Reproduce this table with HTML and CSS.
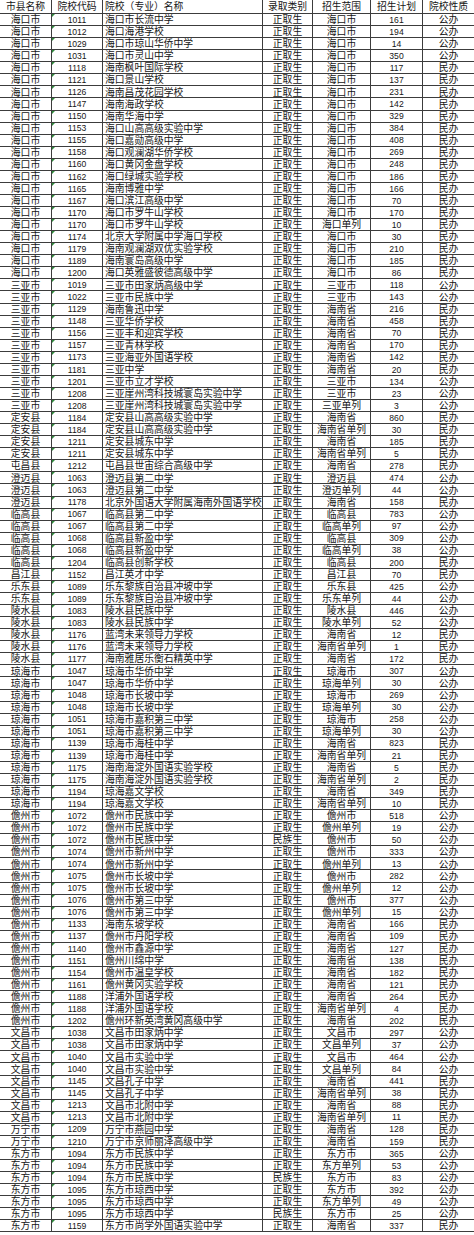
FILE: index.html
```html
<!DOCTYPE html>
<html lang="zh-CN">
<head>
<meta charset="utf-8">
<title>院校招生计划</title>
<link rel="stylesheet" href="styles.css">
</head>
<body>
<div class="sheet">
<span>市县名称</span><span>院校代码</span><span>院校（专业）名称</span><span>录取类别</span><span>招生范围</span><span>招生计划</span><span>院校性质</span>
<span>海口市</span><span>1011</span><span>海口市长流中学</span><span>正取生</span><span>海口市</span><span>161</span><span>公办</span>
<span>海口市</span><span>1012</span><span>海口海港学校</span><span>正取生</span><span>海口市</span><span>194</span><span>公办</span>
<span>海口市</span><span>1029</span><span>海口市琼山华侨中学</span><span>正取生</span><span>海口市</span><span>14</span><span>公办</span>
<span>海口市</span><span>1031</span><span>海口市灵山中学</span><span>正取生</span><span>海口市</span><span>350</span><span>公办</span>
<span>海口市</span><span>1118</span><span>海南枫叶国际学校</span><span>正取生</span><span>海口市</span><span>117</span><span>民办</span>
<span>海口市</span><span>1121</span><span>海口景山学校</span><span>正取生</span><span>海口市</span><span>137</span><span>民办</span>
<span>海口市</span><span>1126</span><span>海南昌茂花园学校</span><span>正取生</span><span>海口市</span><span>231</span><span>民办</span>
<span>海口市</span><span>1147</span><span>海南海政学校</span><span>正取生</span><span>海口市</span><span>142</span><span>民办</span>
<span>海口市</span><span>1150</span><span>海南华海中学</span><span>正取生</span><span>海口市</span><span>329</span><span>民办</span>
<span>海口市</span><span>1153</span><span>海口山高高级实验中学</span><span>正取生</span><span>海口市</span><span>384</span><span>民办</span>
<span>海口市</span><span>1155</span><span>海口嘉勋高级中学</span><span>正取生</span><span>海口市</span><span>408</span><span>民办</span>
<span>海口市</span><span>1158</span><span>海口观澜湖华侨学校</span><span>正取生</span><span>海口市</span><span>269</span><span>民办</span>
<span>海口市</span><span>1160</span><span>海口黄冈金盘学校</span><span>正取生</span><span>海口市</span><span>248</span><span>民办</span>
<span>海口市</span><span>1162</span><span>海口绿城实验学校</span><span>正取生</span><span>海口市</span><span>186</span><span>民办</span>
<span>海口市</span><span>1165</span><span>海南博雅中学</span><span>正取生</span><span>海口市</span><span>166</span><span>民办</span>
<span>海口市</span><span>1167</span><span>海口滨江高级中学</span><span>正取生</span><span>海口市</span><span>70</span><span>民办</span>
<span>海口市</span><span>1170</span><span>海口市罗牛山学校</span><span>正取生</span><span>海口市</span><span>170</span><span>民办</span>
<span>海口市</span><span>1170</span><span>海口市罗牛山学校</span><span>正取生</span><span>海口单列</span><span>10</span><span>民办</span>
<span>海口市</span><span>1174</span><span>北京大学附属中学海口学校</span><span>正取生</span><span>海口市</span><span>30</span><span>民办</span>
<span>海口市</span><span>1179</span><span>海南观澜湖双优实验学校</span><span>正取生</span><span>海口市</span><span>210</span><span>民办</span>
<span>海口市</span><span>1189</span><span>海南寰岛高级中学</span><span>正取生</span><span>海口市</span><span>185</span><span>民办</span>
<span>海口市</span><span>1200</span><span>海口英雅盛彼德高级中学</span><span>正取生</span><span>海口市</span><span>86</span><span>民办</span>
<span>三亚市</span><span>1019</span><span>三亚市田家炳高级中学</span><span>正取生</span><span>三亚市</span><span>118</span><span>公办</span>
<span>三亚市</span><span>1022</span><span>三亚市民族中学</span><span>正取生</span><span>三亚市</span><span>143</span><span>公办</span>
<span>三亚市</span><span>1129</span><span>海南鲁迅中学</span><span>正取生</span><span>海南省</span><span>216</span><span>民办</span>
<span>三亚市</span><span>1148</span><span>三亚华侨学校</span><span>正取生</span><span>海南省</span><span>458</span><span>民办</span>
<span>三亚市</span><span>1156</span><span>三亚丰和迎宾学校</span><span>正取生</span><span>海南省</span><span>70</span><span>民办</span>
<span>三亚市</span><span>1157</span><span>三亚青林学校</span><span>正取生</span><span>海南省</span><span>170</span><span>民办</span>
<span>三亚市</span><span>1173</span><span>三亚海亚外国语学校</span><span>正取生</span><span>海南省</span><span>142</span><span>民办</span>
<span>三亚市</span><span>1181</span><span>三亚中学</span><span>正取生</span><span>海南省</span><span>20</span><span>民办</span>
<span>三亚市</span><span>1201</span><span>三亚市立才学校</span><span>正取生</span><span>三亚市</span><span>134</span><span>公办</span>
<span>三亚市</span><span>1208</span><span>三亚崖州湾科技城寰岛实验中学</span><span>正取生</span><span>三亚市</span><span>23</span><span>公办</span>
<span>三亚市</span><span>1208</span><span>三亚崖州湾科技城寰岛实验中学</span><span>正取生</span><span>三亚单列</span><span>3</span><span>公办</span>
<span>定安县</span><span>1184</span><span>定安县山高高级实验中学</span><span>正取生</span><span>海南省</span><span>860</span><span>民办</span>
<span>定安县</span><span>1184</span><span>定安县山高高级实验中学</span><span>正取生</span><span>海南省单列</span><span>30</span><span>民办</span>
<span>定安县</span><span>1211</span><span>定安县城东中学</span><span>正取生</span><span>海南省</span><span>185</span><span>民办</span>
<span>定安县</span><span>1211</span><span>定安县城东中学</span><span>正取生</span><span>海南省单列</span><span>5</span><span>民办</span>
<span>屯昌县</span><span>1212</span><span>屯昌县世宙综合高级中学</span><span>正取生</span><span>海南省</span><span>278</span><span>民办</span>
<span>澄迈县</span><span>1063</span><span>澄迈县第二中学</span><span>正取生</span><span>澄迈县</span><span>474</span><span>公办</span>
<span>澄迈县</span><span>1063</span><span>澄迈县第二中学</span><span>正取生</span><span>澄迈单列</span><span>44</span><span>公办</span>
<span>澄迈县</span><span>1178</span><span>北京外国语大学附属海南外国语学校</span><span>正取生</span><span>海南省</span><span>158</span><span>民办</span>
<span>临高县</span><span>1067</span><span>临高县第二中学</span><span>正取生</span><span>临高县</span><span>783</span><span>公办</span>
<span>临高县</span><span>1067</span><span>临高县第二中学</span><span>正取生</span><span>临高单列</span><span>97</span><span>公办</span>
<span>临高县</span><span>1068</span><span>临高县新盈中学</span><span>正取生</span><span>临高县</span><span>309</span><span>公办</span>
<span>临高县</span><span>1068</span><span>临高县新盈中学</span><span>正取生</span><span>临高单列</span><span>38</span><span>公办</span>
<span>临高县</span><span>1204</span><span>临高县创新学校</span><span>正取生</span><span>临高县</span><span>200</span><span>民办</span>
<span>昌江县</span><span>1152</span><span>昌江英才中学</span><span>正取生</span><span>昌江县</span><span>70</span><span>民办</span>
<span>乐东县</span><span>1089</span><span>乐东黎族自治县冲坡中学</span><span>正取生</span><span>乐东县</span><span>425</span><span>公办</span>
<span>乐东县</span><span>1089</span><span>乐东黎族自治县冲坡中学</span><span>正取生</span><span>乐东单列</span><span>44</span><span>公办</span>
<span>陵水县</span><span>1083</span><span>陵水县民族中学</span><span>正取生</span><span>陵水县</span><span>446</span><span>公办</span>
<span>陵水县</span><span>1083</span><span>陵水县民族中学</span><span>正取生</span><span>陵水单列</span><span>52</span><span>公办</span>
<span>陵水县</span><span>1176</span><span>蓝湾未来领导力学校</span><span>正取生</span><span>海南省</span><span>12</span><span>民办</span>
<span>陵水县</span><span>1176</span><span>蓝湾未来领导力学校</span><span>正取生</span><span>海南省单列</span><span>1</span><span>民办</span>
<span>陵水县</span><span>1177</span><span>海南雅居乐衡石精英中学</span><span>正取生</span><span>海南省</span><span>172</span><span>民办</span>
<span>琼海市</span><span>1047</span><span>琼海市华侨中学</span><span>正取生</span><span>琼海市</span><span>307</span><span>公办</span>
<span>琼海市</span><span>1047</span><span>琼海市华侨中学</span><span>正取生</span><span>琼海单列</span><span>30</span><span>公办</span>
<span>琼海市</span><span>1048</span><span>琼海市长坡中学</span><span>正取生</span><span>琼海市</span><span>269</span><span>公办</span>
<span>琼海市</span><span>1048</span><span>琼海市长坡中学</span><span>正取生</span><span>琼海单列</span><span>30</span><span>公办</span>
<span>琼海市</span><span>1051</span><span>琼海市嘉积第三中学</span><span>正取生</span><span>琼海市</span><span>258</span><span>公办</span>
<span>琼海市</span><span>1051</span><span>琼海市嘉积第三中学</span><span>正取生</span><span>琼海单列</span><span>30</span><span>公办</span>
<span>琼海市</span><span>1139</span><span>琼海市海桂中学</span><span>正取生</span><span>海南省</span><span>823</span><span>民办</span>
<span>琼海市</span><span>1139</span><span>琼海市海桂中学</span><span>正取生</span><span>海南省单列</span><span>21</span><span>民办</span>
<span>琼海市</span><span>1175</span><span>海南海淀外国语实验学校</span><span>正取生</span><span>海南省</span><span>5</span><span>民办</span>
<span>琼海市</span><span>1175</span><span>海南海淀外国语实验学校</span><span>正取生</span><span>海南省单列</span><span>2</span><span>民办</span>
<span>琼海市</span><span>1194</span><span>琼海嘉文学校</span><span>正取生</span><span>海南省</span><span>349</span><span>民办</span>
<span>琼海市</span><span>1194</span><span>琼海嘉文学校</span><span>正取生</span><span>海南省单列</span><span>10</span><span>民办</span>
<span>儋州市</span><span>1072</span><span>儋州市民族中学</span><span>正取生</span><span>儋州市</span><span>518</span><span>公办</span>
<span>儋州市</span><span>1072</span><span>儋州市民族中学</span><span>正取生</span><span>儋州单列</span><span>19</span><span>公办</span>
<span>儋州市</span><span>1072</span><span>儋州市民族中学</span><span>民族生</span><span>儋州市</span><span>50</span><span>公办</span>
<span>儋州市</span><span>1074</span><span>儋州市新州中学</span><span>正取生</span><span>儋州市</span><span>333</span><span>公办</span>
<span>儋州市</span><span>1074</span><span>儋州市新州中学</span><span>正取生</span><span>儋州单列</span><span>13</span><span>公办</span>
<span>儋州市</span><span>1075</span><span>儋州市长坡中学</span><span>正取生</span><span>儋州市</span><span>282</span><span>公办</span>
<span>儋州市</span><span>1075</span><span>儋州市长坡中学</span><span>正取生</span><span>儋州单列</span><span>12</span><span>公办</span>
<span>儋州市</span><span>1076</span><span>儋州市第三中学</span><span>正取生</span><span>儋州市</span><span>377</span><span>公办</span>
<span>儋州市</span><span>1076</span><span>儋州市第三中学</span><span>正取生</span><span>儋州单列</span><span>15</span><span>公办</span>
<span>儋州市</span><span>1133</span><span>海南东坡学校</span><span>正取生</span><span>海南省</span><span>166</span><span>民办</span>
<span>儋州市</span><span>1137</span><span>儋州市丹阳学校</span><span>正取生</span><span>海南省</span><span>109</span><span>民办</span>
<span>儋州市</span><span>1140</span><span>儋州市鑫源中学</span><span>正取生</span><span>海南省</span><span>127</span><span>民办</span>
<span>儋州市</span><span>1151</span><span>儋州川绵中学</span><span>正取生</span><span>海南省</span><span>138</span><span>民办</span>
<span>儋州市</span><span>1154</span><span>儋州市温皇学校</span><span>正取生</span><span>海南省</span><span>182</span><span>民办</span>
<span>儋州市</span><span>1161</span><span>儋州黄冈实验学校</span><span>正取生</span><span>海南省</span><span>121</span><span>民办</span>
<span>儋州市</span><span>1188</span><span>洋浦外国语学校</span><span>正取生</span><span>海南省</span><span>264</span><span>民办</span>
<span>儋州市</span><span>1188</span><span>洋浦外国语学校</span><span>正取生</span><span>海南省单列</span><span>4</span><span>民办</span>
<span>儋州市</span><span>1202</span><span>儋州环新英湾黄冈高级中学</span><span>正取生</span><span>海南省</span><span>202</span><span>民办</span>
<span>文昌市</span><span>1038</span><span>文昌市田家炳中学</span><span>正取生</span><span>文昌市</span><span>297</span><span>公办</span>
<span>文昌市</span><span>1038</span><span>文昌市田家炳中学</span><span>正取生</span><span>文昌单列</span><span>37</span><span>公办</span>
<span>文昌市</span><span>1040</span><span>文昌市实验中学</span><span>正取生</span><span>文昌市</span><span>464</span><span>公办</span>
<span>文昌市</span><span>1040</span><span>文昌市实验中学</span><span>正取生</span><span>文昌单列</span><span>84</span><span>公办</span>
<span>文昌市</span><span>1145</span><span>文昌孔子中学</span><span>正取生</span><span>海南省</span><span>441</span><span>民办</span>
<span>文昌市</span><span>1145</span><span>文昌孔子中学</span><span>正取生</span><span>海南省单列</span><span>38</span><span>民办</span>
<span>文昌市</span><span>1213</span><span>文昌市北附中学</span><span>正取生</span><span>海南省</span><span>88</span><span>民办</span>
<span>文昌市</span><span>1213</span><span>文昌市北附中学</span><span>正取生</span><span>海南省单列</span><span>11</span><span>民办</span>
<span>万宁市</span><span>1209</span><span>万宁市燕园中学</span><span>正取生</span><span>海南省</span><span>128</span><span>民办</span>
<span>万宁市</span><span>1210</span><span>万宁市京师丽泽高级中学</span><span>正取生</span><span>海南省</span><span>159</span><span>民办</span>
<span>东方市</span><span>1094</span><span>东方市民族中学</span><span>正取生</span><span>东方市</span><span>365</span><span>公办</span>
<span>东方市</span><span>1094</span><span>东方市民族中学</span><span>正取生</span><span>东方单列</span><span>53</span><span>公办</span>
<span>东方市</span><span>1094</span><span>东方市民族中学</span><span>民族生</span><span>东方市</span><span>83</span><span>公办</span>
<span>东方市</span><span>1095</span><span>东方市琼西中学</span><span>正取生</span><span>东方市</span><span>392</span><span>公办</span>
<span>东方市</span><span>1095</span><span>东方市琼西中学</span><span>正取生</span><span>东方单列</span><span>49</span><span>公办</span>
<span>东方市</span><span>1095</span><span>东方市琼西中学</span><span>民族生</span><span>东方市</span><span>25</span><span>公办</span>
<span>东方市</span><span>1159</span><span>东方市尚学外国语实验中学</span><span>正取生</span><span>海南省</span><span>337</span><span>民办</span>
</div>
</body>
</html>
```
FILE: styles.css
```css
html, body {
  margin: 0;
  padding: 0;
  background: #ffffff;
}

.sheet {
  display: grid;
  grid-template-columns: 52px 51px 160px 50px 58px 52px 51px;
  grid-template-rows: 14px;
  grid-auto-rows: 12.07px;
  width: 474px;
  font-family: "Liberation Sans", "Noto Sans CJK SC", sans-serif;
  font-size: 9.8px;
  color: #161616;
  line-height: 1;
}

.sheet > span {
  position: relative;
  display: flex;
  align-items: center;
  justify-content: center;
  box-sizing: border-box;
  padding-top: 1px;
  border-right: 1px solid #3c3c3c;
  border-bottom: 1px solid #3c3c3c;
  white-space: nowrap;
  overflow: hidden;
}

.sheet > span:nth-child(7n) {
  border-right: none;
}

.sheet > span:nth-child(7n+3) {
  justify-content: flex-start;
  padding-left: 2px;
}

.sheet > span:nth-child(7n+2):nth-child(n+8),
.sheet > span:nth-child(7n+6):nth-child(n+8) {
  font-size: 8.6px;
}

.sheet > span:nth-child(7n+2):nth-child(n+8)::before {
  content: "";
  position: absolute;
  left: 0;
  top: 0;
  border-top: 3px solid #2f8a3c;
  border-right: 3px solid transparent;
}
```
